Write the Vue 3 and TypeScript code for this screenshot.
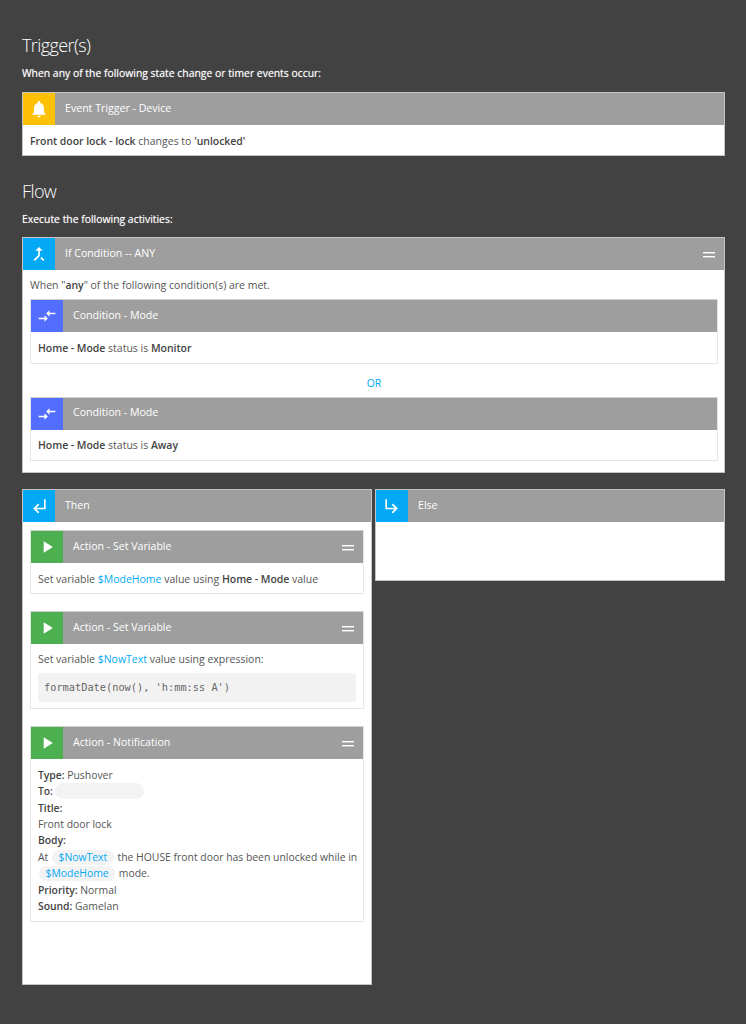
<script setup lang="ts">
const icons: Record<string, string> = {
  bell: 'M12 22c1.1 0 2-.9 2-2h-4c0 1.1.9 2 2 2zm6-6v-5c0-3.07-1.63-5.64-4.5-6.32V4c0-.83-.67-1.5-1.5-1.5s-1.5.67-1.5 1.5v.68C7.64 5.36 6 7.92 6 11v5l-2 2v1h16v-1l-2-2z',
  merge: 'M17 20.41L18.41 19 15 15.59 13.59 17 17 20.41zM7.5 8H11v5.59L5.59 19 7 20.41l6-6V8h3.5L12 3.5 7.5 8z',
  compare: 'M9.01 14H2v2h7.01v3L13 15l-3.99-4v3zm5.98-1v-3H22V8h-7.01V5L11 9l3.99 4z',
  left: 'M11 9l1.42 1.42L8.83 14H18V4h2v12H8.83l3.59 3.58L11 21l-6-6 6-6z',
  right: 'M19 15l-6 6-1.42-1.42L15.17 16H4V4h2v10h9.17l-3.59-3.58L13 9l6 6z',
  play: 'M8 5v14l11-7z',
}
</script>

<template>
  <div class="page">
    <h2 class="title">Trigger(s)</h2>
    <p class="sub">When any of the following state change or timer events occur:</p>
    <section class="card top">
      <header class="head">
        <span class="ico yellow"><svg viewBox="0 0 24 24"><path :d="icons.bell" /></svg></span>
        <span class="name">Event Trigger - Device</span>
      </header>
      <div class="body"><b>Front door lock - lock</b> changes to <b>'unlocked'</b></div>
    </section>

    <h2 class="title flow">Flow</h2>
    <p class="sub">Execute the following activities:</p>
    <section class="card top">
      <header class="head">
        <span class="ico blue"><svg viewBox="0 0 24 24"><path :d="icons.merge" /></svg></span>
        <span class="name">If Condition -- ANY</span>
        <span class="grip"></span>
      </header>
      <div class="body cond">
        <div class="when">When "<b>any</b>" of the following condition(s) are met.</div>
        <section class="card">
          <header class="head">
            <span class="ico indigo"><svg viewBox="0 0 24 24"><path :d="icons.compare" /></svg></span>
            <span class="name">Condition - Mode</span>
          </header>
          <div class="body"><b>Home - Mode</b> status is <b>Monitor</b></div>
        </section>
        <div class="or">OR</div>
        <section class="card">
          <header class="head">
            <span class="ico indigo"><svg viewBox="0 0 24 24"><path :d="icons.compare" /></svg></span>
            <span class="name">Condition - Mode</span>
          </header>
          <div class="body"><b>Home - Mode</b> status is <b>Away</b></div>
        </section>
      </div>
    </section>

    <div class="branches">
      <section class="card top then">
        <header class="head">
          <span class="ico blue"><svg viewBox="0 0 24 24"><path :d="icons.left" /></svg></span>
          <span class="name">Then</span>
        </header>
        <div class="actions">
          <section class="card">
            <header class="head">
              <span class="ico green"><svg viewBox="0 0 24 24"><path :d="icons.play" /></svg></span>
              <span class="name">Action - Set Variable</span>
              <span class="grip"></span>
            </header>
            <div class="body">Set variable <a>$ModeHome</a> value using <b>Home - Mode</b> value</div>
          </section>
          <section class="card">
            <header class="head">
              <span class="ico green"><svg viewBox="0 0 24 24"><path :d="icons.play" /></svg></span>
              <span class="name">Action - Set Variable</span>
              <span class="grip"></span>
            </header>
            <div class="body">
              Set variable <a>$NowText</a> value using expression:
              <pre class="code">formatDate(now(), 'h:mm:ss A')</pre>
            </div>
          </section>
          <section class="card">
            <header class="head">
              <span class="ico green"><svg viewBox="0 0 24 24"><path :d="icons.play" /></svg></span>
              <span class="name">Action - Notification</span>
              <span class="grip"></span>
            </header>
            <div class="body notif">
              <div><b>Type:</b> Pushover</div>
              <div><b>To:</b> <span class="pill blank"></span></div>
              <div><b>Title:</b></div>
              <div>Front door lock</div>
              <div><b>Body:</b></div>
              <div>At <span class="pill"><a>$NowText</a></span> the HOUSE front door has been unlocked while in <span class="pill"><a>$ModeHome</a></span> mode.</div>
              <div><b>Priority:</b> Normal</div>
              <div><b>Sound:</b> Gamelan</div>
            </div>
          </section>
        </div>
      </section>
      <section class="card top else">
        <header class="head">
          <span class="ico blue"><svg viewBox="0 0 24 24"><path :d="icons.right" /></svg></span>
          <span class="name">Else</span>
        </header>
      </section>
    </div>
  </div>
</template>

<style scoped>
.page {
  box-sizing: border-box;
  width: 746px;
  height: 1024px;
  padding: 34px 21px 0 22px;
  background: #424242;
  font-family: "Open Sans", "Noto Sans", sans-serif;
  font-size: 10.5px;
  line-height: 16.4px;
  color: #555;
  overflow: hidden;
}
.title {
  margin: 0;
  font-size: 18px;
  line-height: 22px;
  font-weight: 300;
  letter-spacing: -0.6px;
  color: #fff;
}
.title.flow { margin-top: 23.4px; }
.sub {
  margin: 9px 0 11px;
  font-size: 10.4px;
  line-height: 16px;
  font-weight: 400;
  color: #fff;
  text-shadow: 0 0 1px rgba(255, 255, 255, .6);
}
.title.flow + .sub { margin-bottom: 10.2px; }
.card {
  box-sizing: border-box;
  background: #fff;
  border: 1px solid #e6e6e6;
  border-top-color: #d0d0d0;
}
.card.top { border-color: #c4c4c4; }
.head {
  display: flex;
  align-items: center;
  height: 32px;
  background: #9e9e9e;
  color: #fff;
  font-size: 10.6px;
}
.ico {
  flex: none;
  display: flex;
  align-items: center;
  justify-content: center;
  width: 32px;
  height: 32px;
}
.ico svg { width: 20px; height: 20px; fill: #fff; }
.yellow { background: #ffc107; }
.blue { background: #03a9f4; }
.indigo { background: #536dfe; }
.green { background: #4caf50; }
.name { margin: 0 0 2px 10px; }
.grip {
  box-sizing: border-box;
  margin: 1px 9px 0 auto;
  width: 12px;
  height: 5px;
  border-top: 1px solid #fff;
  border-bottom: 1px solid #fff;
  box-shadow: 0 1px rgba(255, 255, 255, .4), inset 0 1px rgba(255, 255, 255, .4);
}
.body { padding: 7.6px 7px 6.4px; }
.body b { font-weight: 600; color: #444; letter-spacing: -0.05px; }
a { color: #03a9f4; }
.cond { padding: 7px 6px 11px 7px; }
.when { margin-bottom: 6px; }
.or { text-align: center; color: #03a9f4; margin: 11px 0 5.4px; }
.branches {
  display: flex;
  gap: 3px;
  align-items: flex-start;
  margin-top: 16px;
}
.then { width: 350px; height: 495.6px; }
.else { width: 350px; height: 92px; }
.actions {
  display: flex;
  flex-direction: column;
  gap: 16.5px;
  padding: 8px 7px;
}
.code {
  box-sizing: border-box;
  height: 29px;
  margin: 5px 0 0;
  padding: 6px;
  background: #f2f2f2;
  border-radius: 3px;
  font-family: "DejaVu Sans Mono", monospace;
  font-size: 10.3px;
  line-height: 17px;
  color: #666;
}
.pill {
  display: inline-block;
  margin: 0 1px;
  padding: 0 6.5px;
  background: #f3f3f3;
  border-radius: 8px;
  line-height: 15px;
}
.blank {
  box-sizing: border-box;
  width: 89px;
  height: 16px;
  margin-left: -1px;
  padding: 0;
  vertical-align: top;
}
.notif { padding: 8px 1px 7px 7px; font-size: 10.4px; }
</style>

<style>
html, body { background: #424242; }
</style>
